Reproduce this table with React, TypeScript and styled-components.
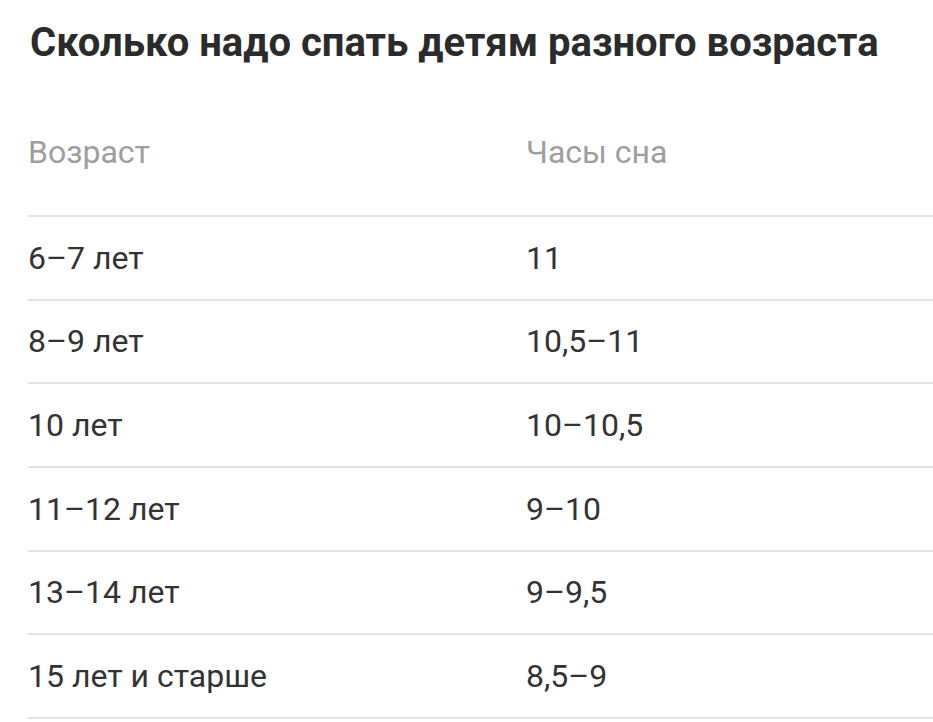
import React from 'react';
import styled, { createGlobalStyle } from 'styled-components';

const GlobalStyle = createGlobalStyle`
  body {
    margin: 0;
    background: #fff;
    font-family: Roboto, "Noto Sans", "Liberation Sans", sans-serif;
  }
`;

const Page = styled.div`
  padding: 19px 0 0 28px;
`;

const Title = styled.h2`
  margin: 0;
  font-size: 40px;
  line-height: 48px;
  font-weight: 700;
  color: #2b2b2b;
  padding-left: 2px;
`;

const Table = styled.div`
  margin-top: 67px;
`;

const Row = styled.div<{ $head?: boolean }>`
  display: grid;
  grid-template-columns: 498px 1fr;
  align-items: center;
  height: ${p => (p.$head ? 'auto' : '81.67px')};
  padding-bottom: ${p => (p.$head ? '45px' : '0')};
  border-bottom: 2px solid #e3e3e3;
`;

const Cell = styled.div<{ $head?: boolean }>`
  font-size: 32px;
  line-height: 36px;
  color: ${p => (p.$head ? '#9e9e9e' : '#333')};
`;

const rows: [string, string][] = [
  ['6–7 лет', '11'],
  ['8–9 лет', '10,5–11'],
  ['10 лет', '10–10,5'],
  ['11–12 лет', '9–10'],
  ['13–14 лет', '9–9,5'],
  ['15 лет и старше', '8,5–9'],
];

const App: React.FC = () => {
  return (
    <Page>
      <GlobalStyle />
      <Title>Сколько надо спать детям разного возраста</Title>
      <Table>
        <Row $head>
          <Cell $head>Возраст</Cell>
          <Cell $head>Часы сна</Cell>
        </Row>
        {rows.map(([age, hours]) => (
          <Row key={age}>
            <Cell>{age}</Cell>
            <Cell>{hours}</Cell>
          </Row>
        ))}
      </Table>
    </Page>
  );
};

export default App;
